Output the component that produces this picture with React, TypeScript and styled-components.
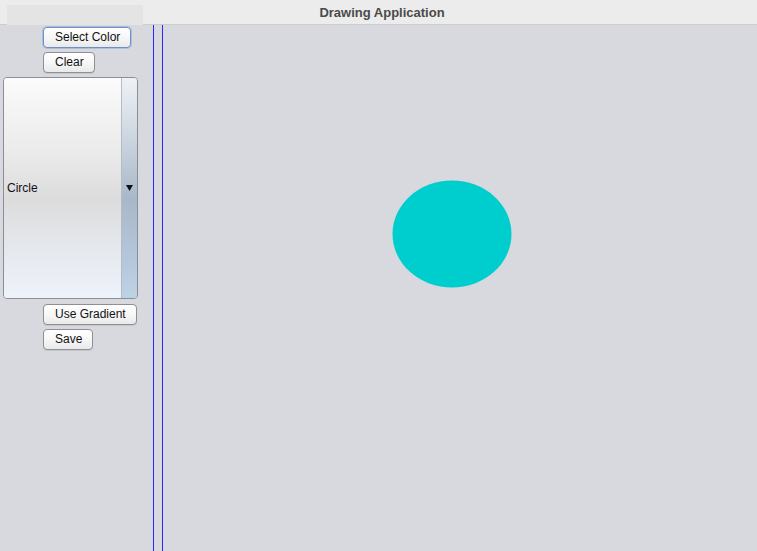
import styled, { createGlobalStyle, css } from "styled-components"

const GlobalStyle = createGlobalStyle`
  html, body {
    margin: 0;
    padding: 0;
    width: 757px;
    height: 551px;
    overflow: hidden;
    background: #d7d9df;
    font-family: "Liberation Sans", Arial, sans-serif;
  }
`

const Window = styled.div`
  width: 757px;
  height: 551px;
  display: flex;
  flex-direction: column;
  background: #d7d9df;
`

const TitleBar = styled.div`
  height: 24px;
  flex: 0 0 24px;
  display: grid;
  grid-template-columns: 143px 1fr 143px;
  background: #ececec;
  border-bottom: 1px solid #cdcdcd;
`

const TitleGhost = styled.div`
  margin: 5px 0 -1px 7px;
  background: #e4e4e4;
`

const Title = styled.div`
  display: flex;
  align-items: center;
  justify-content: center;
  padding-left: 7px;
  font-size: 13px;
  font-weight: bold;
  color: #4a4a4a;
`

const Body = styled.div`
  flex: 1;
  display: flex;
  min-height: 0;
`

const Sidebar = styled.div`
  width: 153px;
  flex: 0 0 153px;
  display: flex;
  flex-direction: column;
  align-items: flex-start;
`

const Button = styled.button<{ $focused?: boolean; $gap?: number }>`
  margin: ${(p) => p.$gap ?? 4}px 0 0 43px;
  height: 21px;
  padding: 0 10px 0 11px;
  border: 1px solid #8d8f93;
  border-radius: 4px;
  background: linear-gradient(#ffffff 0%, #f7f7f7 50%, #e9e9e9 100%);
  box-shadow: 0 1px 0 rgba(0, 0, 0, 0.08);
  font-family: "Liberation Sans", Arial, sans-serif;
  font-size: 12px;
  color: #111;
  line-height: 19px;
  cursor: default;
  ${(p) =>
    p.$focused &&
    css`
      border-color: #6f90c4;
      box-shadow: 0 0 0 1px rgba(120, 160, 215, 0.45);
    `}
`

const Combo = styled.div`
  margin: 4px 0 0 3px;
  width: 135px;
  height: 222px;
  display: flex;
  border: 1px solid #8a8e95;
  border-radius: 4px;
  overflow: hidden;
  box-sizing: border-box;
`

const ComboValue = styled.div`
  flex: 1;
  display: flex;
  align-items: center;
  padding-left: 3px;
  font-size: 12px;
  color: #111;
  background: linear-gradient(#fbfbfb 0%, #eaeaea 35%, #dcdcdc 55%, #e6e9ee 80%, #eef2fa 100%);
`

const ComboArrow = styled.div`
  width: 15px;
  flex: 0 0 15px;
  display: flex;
  align-items: center;
  justify-content: center;
  border-left: 1px solid #b4bcc6;
  background: linear-gradient(#eef1f5 0%, #c9d3de 30%, #a9b8c9 55%, #b3c6d9 80%, #bed2e6 100%);
`

const Canvas = styled.div`
  flex: 1;
  display: flex;
  border-left: 1px solid #2727ff;
  padding-left: 8px;
`

const DrawPanel = styled.div`
  position: relative;
  flex: 1;
  border-left: 1px solid #2727ff;
  background: #d7d9df;
`

const Drawing = styled.svg`
  display: block;
  width: 100%;
  height: 100%;
`

export default function App() {
  return (
    <>
      <GlobalStyle />
      <Window>
        <TitleBar>
          <TitleGhost />
          <Title>Drawing Application</Title>
          <div />
        </TitleBar>
        <Body>
          <Sidebar>
            <Button $focused $gap={2}>Select Color</Button>
            <Button>Clear</Button>
            <Combo>
              <ComboValue>Circle</ComboValue>
              <ComboArrow>
                <svg width="7" height="6" viewBox="0 0 7 6">
                  <path d="M0 0 H7 L3.5 6 Z" fill="#111" />
                </svg>
              </ComboArrow>
            </Combo>
            <Button $gap={5}>Use Gradient</Button>
            <Button>Save</Button>
          </Sidebar>
          <Canvas>
            <DrawPanel>
              <Drawing>
                <ellipse cx={289} cy={209} rx={59.5} ry={53.5} fill="#00cdcd" />
              </Drawing>
            </DrawPanel>
          </Canvas>
        </Body>
      </Window>
    </>
  )
}
